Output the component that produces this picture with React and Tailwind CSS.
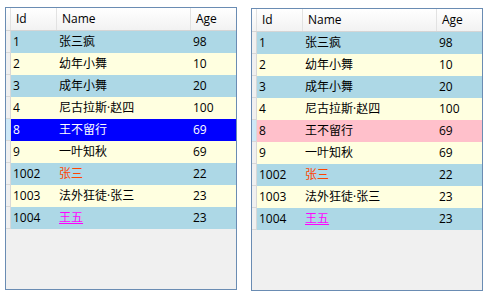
import React from "react";

const rows = [
  { id: "1", name: "张三疯", age: "98", bg: "bg-[#add8e6]" },
  { id: "2", name: "幼年小舞", age: "10", bg: "bg-[#ffffe0]" },
  { id: "3", name: "成年小舞", age: "20", bg: "bg-[#add8e6]" },
  { id: "4", name: "尼古拉斯·赵四", age: "100", bg: "bg-[#ffffe0]" },
  { id: "8", name: "王不留行", age: "69", bg: "bg-[#ffffe0]", selected: true },
  { id: "9", name: "一叶知秋", age: "69", bg: "bg-[#ffffe0]" },
  { id: "1002", name: "张三", age: "22", bg: "bg-[#add8e6]", nameClass: "text-[#ff4500]" },
  { id: "1003", name: "法外狂徒·张三", age: "23", bg: "bg-[#ffffe0]" },
  { id: "1004", name: "王五", age: "23", bg: "bg-[#add8e6]", nameClass: "text-[#ff00ff] underline" },
];

const font = "font-['Open_Sans','Noto_Sans_CJK_SC',sans-serif]";

const Grid = ({ selectedClass, className }) => (
  <div className={`w-[232px] h-[283px] border border-[#6a8cb3] bg-[#f0f0f0] flex flex-col text-[12px] text-black ${font} ${className}`}>
    <div className="flex h-[23px] bg-gradient-to-b from-white to-[#f2f2f2] border-b border-[#d5d5d5]">
      <div className="w-[5px] border-r border-[#e2e2e2]" />
      <div className="w-[46px] pl-[5px] flex items-center border-r border-[#e2e2e2]">Id</div>
      <div className="w-[134px] pl-[5px] flex items-center border-r border-[#e2e2e2]">Name</div>
      <div className="flex-1 pl-[5px] flex items-center">Age</div>
    </div>
    {rows.map((r) => {
      const bg = r.selected ? selectedClass : r.bg;
      return (
        <div key={r.id} className="flex h-[22px]">
          <div className={`w-[5px] border-r border-b border-[#d8d8d8] ${r.selected ? "bg-[#cde8f7]" : "bg-[#f0f0f0]"}`} />
          <div className={`flex flex-1 items-center ${bg}`}>
            <div className="w-[46px] pl-[2px]">{r.id}</div>
            <div className={`w-[134px] pl-[2px] ${r.selected ? "" : r.nameClass || ""}`}>
              <span className={r.nameClass && !r.selected ? r.nameClass : ""}>{r.name}</span>
            </div>
            <div className="flex-1 pl-[2px]">{r.age}</div>
          </div>
        </div>
      );
    })}
  </div>
);

export default function App() {
  return (
    <div className="w-[490px] h-[294px] bg-white flex items-start pl-[5px] pt-[7px] gap-[14px]">
      <Grid selectedClass="bg-[#0000ff] text-white" />
      <Grid selectedClass="bg-[#ffc0cb]" className="mt-[1px]" />
    </div>
  );
}
